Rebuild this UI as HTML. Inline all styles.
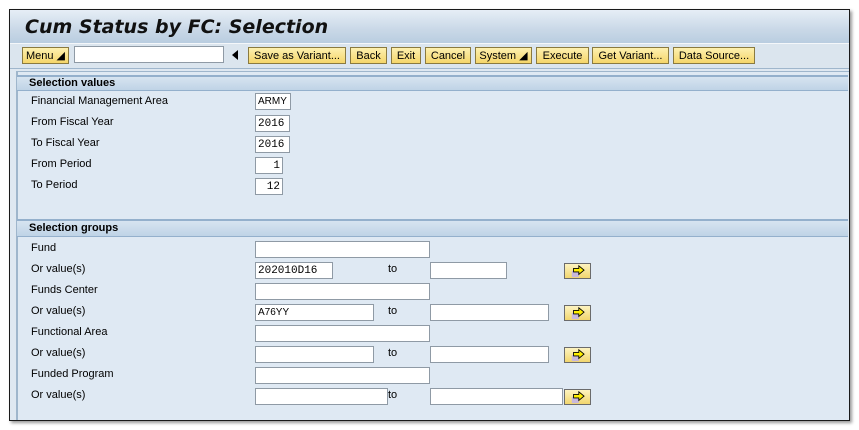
<!DOCTYPE html>
<html><head><meta charset="utf-8"><style>
*{margin:0;padding:0;box-sizing:border-box}
body{width:859px;height:430px;background:#fff;position:relative;overflow:hidden;font-family:"Liberation Sans",Arial,sans-serif;font-size:11px;color:#000}
.a{position:absolute}
#win{left:9px;top:9px;width:841px;height:412px;border:1px solid #1a1a1a;background:#dfe8f1;box-shadow:2px 2px 3px #999}
#title{left:10px;top:10px;width:839px;height:33px;background:linear-gradient(#e6eef6,#c9d8e7 60%,#b9cde0)}
#title span{position:absolute;left:15px;top:6px;font-family:"DejaVu Sans",sans-serif;font-size:19px;font-weight:bold;font-style:italic;color:#111}
#tb{left:10px;top:43px;width:839px;height:26px;background:#dbe5ee;border-top:1px solid #f4f7fa;border-bottom:1px solid #9fb6cc}
.btn{position:absolute;top:47px;height:17px;border:1px solid #8a7a40;background:linear-gradient(#fdf0b0,#f5d66a);font-size:11px;line-height:16px;text-align:center;color:#000}
.in{position:absolute;height:17px;background:#fff;border:1px solid #8f9aa5;font-family:"Liberation Mono",monospace;font-size:11px;line-height:16px;padding:0 2px}
.lbl{position:absolute;left:31px;margin-top:1px}
.hdr{position:absolute;left:17px;width:831px;height:16px;background:linear-gradient(#d7e4f0,#bfd3e6);border-top:2px solid #94b0cc;border-bottom:1px solid #94b0cc;font-weight:bold;padding-left:12px;line-height:13px}
.arr{position:absolute;left:564px;width:27px;height:16px;border:1px solid #6b6b6b;background:linear-gradient(#fdf3c0,#f2d66e)}
</style></head><body>
<div id="win" class="a"></div>
<div id="title" class="a"><span>Cum Status by FC: Selection</span></div>
<div id="tb" class="a"></div>
<div class="btn" style="left:22px;width:47px">Menu ◢</div>
<div class="a" style="left:74px;top:46px;width:150px;height:17px;background:#fff;border:1px solid #8f9aa5"></div>
<div class="a" style="left:232px;top:50px;width:0;height:0;border-top:5px solid transparent;border-bottom:5px solid transparent;border-right:6px solid #000"></div>
<div class="btn" style="left:248px;width:98px">Save as Variant...</div>
<div class="btn" style="left:350px;width:37px">Back</div>
<div class="btn" style="left:391px;width:30px">Exit</div>
<div class="btn" style="left:425px;width:46px">Cancel</div>
<div class="btn" style="left:475px;width:57px">System ◢</div>
<div class="btn" style="left:536px;width:53px">Execute</div>
<div class="btn" style="left:592px;width:77px">Get Variant...</div>
<div class="btn" style="left:673px;width:82px">Data Source...</div>
<div class="a" style="left:16px;top:71px;width:833px;height:349px;background:#dfe9f3;border-left:2px solid #9fb6cc;border-top:1px solid #9fb6cc"></div>
<div class="hdr" style="top:75px">Selection values</div>
<div class="lbl" style="top:94px">Financial Management Area</div>
<div class="lbl" style="top:115px">From Fiscal Year</div>
<div class="lbl" style="top:136px">To Fiscal Year</div>
<div class="lbl" style="top:157px">From Period</div>
<div class="lbl" style="top:178px">To Period</div>
<div class="in" style="left:255px;top:93px;width:36px;font-family:'Liberation Sans';font-size:10px">ARMY</div>
<div class="in" style="left:255px;top:115px;width:35px">2016</div>
<div class="in" style="left:255px;top:136px;width:35px">2016</div>
<div class="in" style="left:255px;top:157px;width:28px;text-align:right">1</div>
<div class="in" style="left:255px;top:178px;width:28px;text-align:right">12</div>
<div class="hdr" style="top:219px;height:18px;line-height:15px">Selection groups</div>
<div class="lbl" style="top:241px">Fund</div>
<div class="lbl" style="top:262px">Or value(s)</div>
<div class="lbl" style="top:283px">Funds Center</div>
<div class="lbl" style="top:304px">Or value(s)</div>
<div class="lbl" style="top:325px">Functional Area</div>
<div class="lbl" style="top:346px">Or value(s)</div>
<div class="lbl" style="top:367px">Funded Program</div>
<div class="lbl" style="top:388px">Or value(s)</div>
<div class="in" style="left:255px;top:241px;width:175px"></div>
<div class="in" style="left:255px;top:262px;width:78px">202010D16</div>
<div class="lbl" style="left:388px;top:262px">to</div>
<div class="in" style="left:430px;top:262px;width:77px"></div>
<div class="in" style="left:255px;top:283px;width:175px"></div>
<div class="in" style="left:255px;top:304px;width:119px;font-family:'Liberation Sans';font-size:10px">A76YY</div>
<div class="lbl" style="left:388px;top:304px">to</div>
<div class="in" style="left:430px;top:304px;width:119px"></div>
<div class="in" style="left:255px;top:325px;width:175px"></div>
<div class="in" style="left:255px;top:346px;width:119px"></div>
<div class="lbl" style="left:388px;top:346px">to</div>
<div class="in" style="left:430px;top:346px;width:119px"></div>
<div class="in" style="left:255px;top:367px;width:175px"></div>
<div class="in" style="left:255px;top:388px;width:133px"></div>
<div class="lbl" style="left:388px;top:388px">to</div>
<div class="in" style="left:430px;top:388px;width:133px"></div>
<svg class="arr" style="top:263px" viewBox="0 0 27 16"><rect x="7" y="8" width="8" height="7" fill="#c8b8dc"/><path d="M9 5h6V2l6 5-6 5V9H9z" fill="#ffef00" stroke="#000" stroke-width="1"/></svg>
<svg class="arr" style="top:305px" viewBox="0 0 27 16"><rect x="7" y="8" width="8" height="7" fill="#c8b8dc"/><path d="M9 5h6V2l6 5-6 5V9H9z" fill="#ffef00" stroke="#000" stroke-width="1"/></svg>
<svg class="arr" style="top:347px" viewBox="0 0 27 16"><rect x="7" y="8" width="8" height="7" fill="#c8b8dc"/><path d="M9 5h6V2l6 5-6 5V9H9z" fill="#ffef00" stroke="#000" stroke-width="1"/></svg>
<svg class="arr" style="top:389px" viewBox="0 0 27 16"><rect x="7" y="8" width="8" height="7" fill="#c8b8dc"/><path d="M9 5h6V2l6 5-6 5V9H9z" fill="#ffef00" stroke="#000" stroke-width="1"/></svg>
</body></html>
